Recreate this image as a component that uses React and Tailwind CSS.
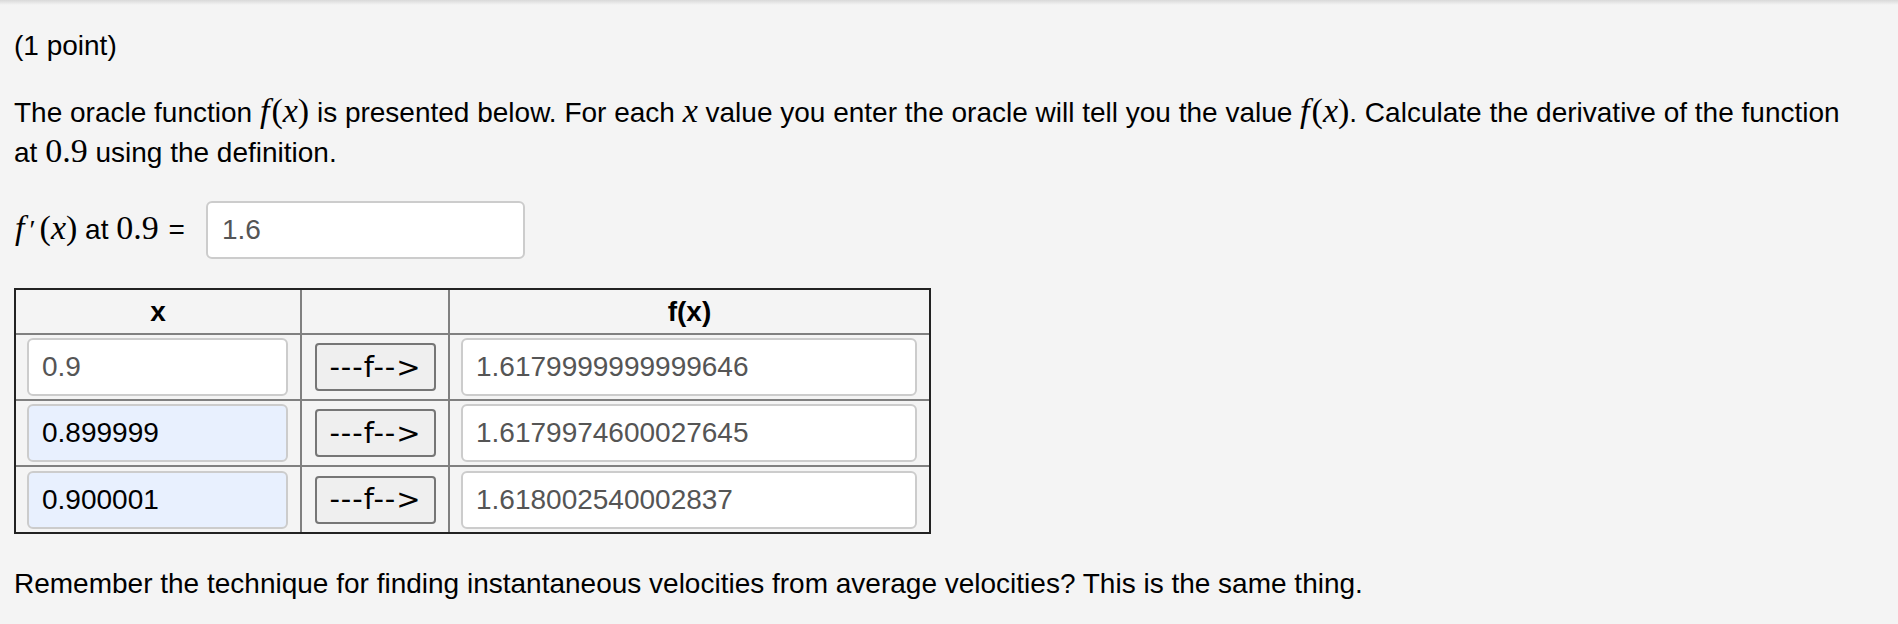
import React from "react";

const M = ({ children, italic }) => (
  <span
    className={`font-['Liberation_Serif',serif] text-[34px] leading-none ${italic ? "italic" : ""}`}
  >
    {children}
  </span>
);

const Fx = () => (
  <span className="font-['Liberation_Serif',serif] text-[34px] leading-none">
    <i className="mr-[2px]">f</i>(<i>x</i>)
  </span>
);

const rows = [
  { x: "0.9", fx: "1.6179999999999646", filled: false },
  { x: "0.899999", fx: "1.6179974600027645", filled: true },
  { x: "0.900001", fx: "1.618002540002837", filled: true },
];

const App = () => {
  return (
    <div className="min-h-[624px] w-full bg-[#f4f4f4] font-['Liberation_Sans',Arial,sans-serif] text-[28px] leading-[40px] text-black">
      <div className="h-[5px] bg-gradient-to-b from-[#d9d9d9] to-[#f4f4f4]" />
      <div className="px-[14px] pt-[21px]">
        <p>(1 point)</p>

        <p className="mt-[27px]">
          The oracle function <Fx /> is presented below. For each{" "}
          <M italic>x</M> value you enter the oracle will tell you the value{" "}
          <Fx />. Calculate the derivative of the function
          <br />
          at <M>0.9</M> using the definition.
        </p>

        <div className="mt-[28px] flex items-center">
          <span className="pl-[1px]">
            <span className="font-['Liberation_Serif',serif] text-[34px] leading-none">
              <i>f</i>
              <span className="ml-[5px] mr-[4px] text-[28px]">&#8242;</span>(<i>x</i>)
            </span>{" "}
            at <M>0.9</M> <span className="ml-[2px]">=</span>
          </span>
          <input
            readOnly
            value="1.6"
            className="ml-[21px] h-[58px] w-[319px] rounded-[6px] border-2 border-[#cccccc] bg-white pl-[14px] text-[28px] text-[#555] outline-none"
          />
        </div>

        <div className="mt-[29px] w-fit border-2 border-[#222]">
          <table className="border-collapse border-hidden">
            <thead>
              <tr>
                <th className="h-[44px] w-[285px] border-2 border-[#808080] p-0 text-center font-bold">
                  x
                </th>
                <th className="h-[44px] w-[147px] border-2 border-[#808080] p-0"></th>
                <th className="h-[44px] w-[480px] border-2 border-[#808080] p-0 text-center font-bold">
                  f(x)
                </th>
              </tr>
            </thead>
            <tbody>
              {rows.map((r, i) => (
                <tr key={i}>
                  <td className="h-[66px] border-2 border-[#808080] pl-[11px] pr-[12px]">
                    <input
                      readOnly
                      value={r.x}
                      className={`h-[58px] w-full rounded-[6px] border-2 border-[#cccccc] pl-[13px] text-[28px] outline-none ${
                        r.filled ? "bg-[#e8f0fe] text-black" : "bg-white text-[#555]"
                      }`}
                    />
                  </td>
                  <td className="h-[66px] border-2 border-[#808080] pl-[13px] pr-[12px]">
                    <button className="h-[48px] w-[121px] rounded-[4px] border-2 border-[#767676] bg-[#efefef] font-['DejaVu_Sans',sans-serif] text-[29px] leading-none tracking-[1px] text-black">
                      ---f--&gt;
                    </button>
                  </td>
                  <td className="h-[66px] border-2 border-[#808080] pl-[11px] pr-[12px]">
                    <input
                      readOnly
                      value={r.fx}
                      className="h-[58px] w-full rounded-[6px] border-2 border-[#cccccc] bg-white pl-[13px] text-[28px] text-[#555] outline-none"
                    />
                  </td>
                </tr>
              ))}
            </tbody>
          </table>
        </div>

        <p className="mt-[30px]">
          Remember the technique for finding instantaneous velocities from
          average velocities? This is the same thing.
        </p>
      </div>
    </div>
  );
};

export default App;
